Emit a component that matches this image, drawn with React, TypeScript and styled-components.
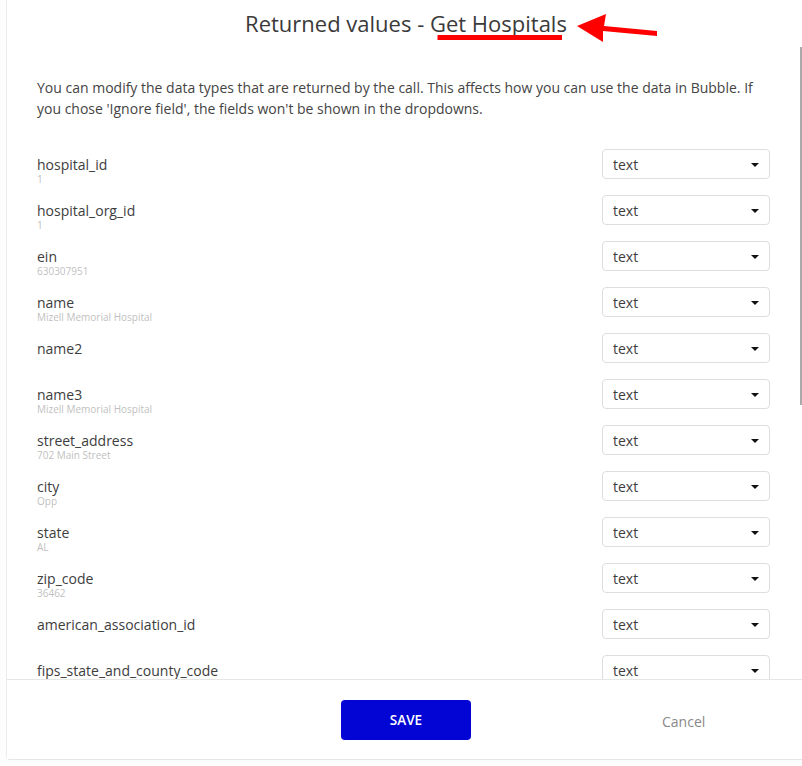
import React from "react";
import styled, { createGlobalStyle } from "styled-components";

const Global = createGlobalStyle`
  html, body { margin: 0; padding: 0; height: 766px; overflow: hidden; background: #fff; }
  body { font-family: "Open Sans", "Liberation Sans", sans-serif; color: #3d3d3d; }
  * { box-sizing: border-box; }
`;

const Page = styled.div`
  position: relative;
  width: 802px;
  height: 766px;
  overflow: hidden;
  background: #fdfdfd;
  padding-left: 6px;
`;

const Modal = styled.div`
  width: 800px;
  height: 760px;
  display: flex;
  flex-direction: column;
  background: #fff;
  border-left: 1px solid #ececec;
  border-bottom: 1px solid #e6e6e6;
  border-bottom-left-radius: 4px;
`;

const Title = styled.h1`
  flex: none;
  height: 47px;
  margin: 0;
  padding: 7px 0 0 9px;
  width: 789px;
  font-size: 22px;
  line-height: 32px;
  font-weight: 400;
  text-align: center;
  color: #3a3a3a;
`;

const ScrollArea = styled.div`
  flex: 1;
  min-height: 0;
  overflow: hidden;
  padding: 30px 32px 0 30px;
`;

const Description = styled.p`
  margin: 0 0 30px;
  width: 730px;
  font-size: 14px;
  line-height: 21px;
  color: #444;
`;

const Row = styled.div`
  display: flex;
  justify-content: space-between;
  height: 46px;
  width: 733px;
`;

const FieldText = styled.div`
  display: flex;
  flex-direction: column;
  padding-top: 6.5px;
`;

const FieldName = styled.span`
  font-size: 14px;
  line-height: 18px;
  color: #3d3d3d;
`;

const Sample = styled.span`
  font-size: 10px;
  line-height: 10px;
  color: #bfbfbf;
`;

const Select = styled.div`
  flex: none;
  display: flex;
  align-items: center;
  justify-content: space-between;
  width: 168px;
  height: 30px;
  padding: 0 10px 0 10px;
  border: 1px solid #dedede;
  border-radius: 4px;
  background: #fff;
  font-size: 14px;
  color: #3d3d3d;
`;

const Caret = styled.span`
  width: 0;
  height: 0;
  margin-top: 1px;
  border-left: 4.5px solid transparent;
  border-right: 4.5px solid transparent;
  border-top: 4.5px solid #111;
`;

const Footer = styled.div`
  flex: none;
  height: 80px;
  display: flex;
  align-items: flex-start;
  padding: 20px 0 0 334px;
  border-top: 1px solid #e6e6e6;
  background: #fff;
`;

const SaveButton = styled.button`
  width: 130px;
  height: 40px;
  border: 0;
  border-radius: 4px;
  background: #0205d3;
  color: #fff;
  font-family: inherit;
  font-size: 13.5px;
  font-weight: 600;
  padding: 0;
`;

const CancelLink = styled.span`
  margin: 11px 0 0 191px;
  font-size: 14px;
  line-height: 21px;
  color: #888;
`;

const ScrollThumb = styled.div`
  position: absolute;
  top: 47px;
  right: 0;
  width: 2px;
  height: 358px;
  background: #aaa;
`;

const Annotation = styled.svg`
  position: absolute;
  inset: 0;
  pointer-events: none;
`;

const fields: [string, string][] = [
  ["hospital_id", "1"],
  ["hospital_org_id", "1"],
  ["ein", "630307951"],
  ["name", "Mizell Memorial Hospital"],
  ["name2", ""],
  ["name3", "Mizell Memorial Hospital"],
  ["street_address", "702 Main Street"],
  ["city", "Opp"],
  ["state", "AL"],
  ["zip_code", "36462"],
  ["american_association_id", ""],
  ["fips_state_and_county_code", ""],
];

export default function App() {
  return (
    <Page>
      <Global />
      <Modal>
        <Title>Returned values - Get Hospitals</Title>
        <ScrollArea>
          <Description>
            You can modify the data types that are returned by the call. This affects how you can use the data in Bubble. If you chose 'Ignore field', the fields won't be shown in the dropdowns.
          </Description>
          {fields.map(([name, sample]) => (
            <Row key={name}>
              <FieldText>
                <FieldName>{name}</FieldName>
                {sample && <Sample>{sample}</Sample>}
              </FieldText>
              <Select>
                text
                <Caret />
              </Select>
            </Row>
          ))}
        </ScrollArea>
        <Footer>
          <SaveButton>SAVE</SaveButton>
          <CancelLink>Cancel</CancelLink>
        </Footer>
      </Modal>
      <ScrollThumb />
      <Annotation width="802" height="766" viewBox="0 0 802 766">
        <rect x="437.5" y="35" width="124.5" height="5" fill="#f00" />
        <polygon points="577,26 606,14 604,26 657,31 657,36 603,31 603,42" fill="#f00" />
      </Annotation>
    </Page>
  );
}
